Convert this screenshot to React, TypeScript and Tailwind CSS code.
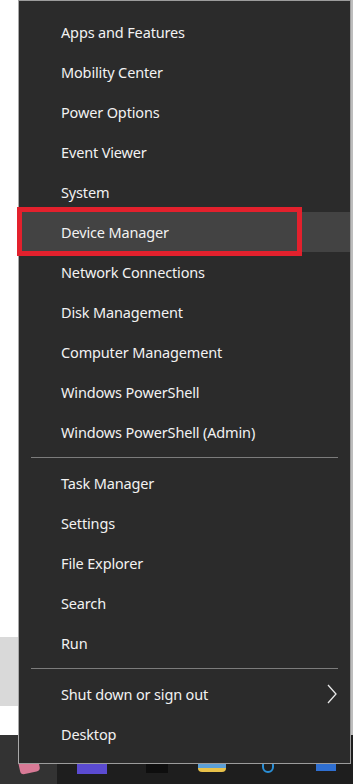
import { Fragment } from "react";

type Entry = { label: string; submenu?: boolean; active?: boolean } | "sep";

const ENTRIES: Entry[] = [
  { label: "Apps and Features" },
  { label: "Mobility Center" },
  { label: "Power Options" },
  { label: "Event Viewer" },
  { label: "System" },
  { label: "Device Manager", active: true },
  { label: "Network Connections" },
  { label: "Disk Management" },
  { label: "Computer Management" },
  { label: "Windows PowerShell" },
  { label: "Windows PowerShell (Admin)" },
  "sep",
  { label: "Task Manager" },
  { label: "Settings" },
  { label: "File Explorer" },
  { label: "Search" },
  { label: "Run" },
  "sep",
  { label: "Shut down or sign out", submenu: true },
  { label: "Desktop" },
];

function Chevron() {
  return (
    <svg width="12" height="20" viewBox="0 0 12 20" className="absolute right-[12px] top-[10px]">
      <polyline points="2,1 10,10 2,19" fill="none" stroke="#e8e8e8" strokeWidth="1.3" />
    </svg>
  );
}

function Taskbar() {
  return (
    <div className="flex h-[49px] bg-[#1e1e1e]">
      <div className="flex w-[57px] items-center justify-center bg-[#333333]">
        <div className="mt-[10px] h-[16px] w-[20px] -rotate-12 rounded-sm bg-[#d87a96]" />
      </div>
      <div className="flex w-[70px] items-center justify-center">
        <div className="mt-[12px] h-[16px] w-[30px] bg-[#5b4bd1]" />
      </div>
      <div className="flex w-[60px] items-center justify-center">
        <div className="mt-[10px] h-[16px] w-[22px] bg-[#0e0e0e]" />
      </div>
      <div className="flex w-[50px] items-center justify-center">
        <div className="mt-[10px] h-[14px] w-[28px] rounded-sm border-b-4 border-[#e8c14a] bg-[#5c9fd6]" />
      </div>
      <div className="flex w-[62px] items-center justify-center">
        <div className="mt-[12px] h-[14px] w-[12px] rounded-full border-2 border-[#2a8fd6]" />
      </div>
      <div className="flex flex-1 items-center justify-center">
        <div className="mt-[8px] h-[14px] w-[20px] bg-[#2f6fd1]" />
      </div>
    </div>
  );
}

export default function App() {
  return (
    <div className="relative h-[784px] w-[353px] overflow-hidden bg-white font-['Segoe_UI','Noto_Sans',sans-serif]">
      {/* desktop behind the menu */}
      <div className="flex h-[735px]">
        <div className="flex flex-1 flex-col">
          <div className="h-[637px] bg-white" />
          <div className="h-[69px] bg-[#d9d9d9]" />
          <div className="flex-1 bg-white" />
        </div>
        <div className="w-[3px] bg-[#bdbdbd]" />
      </div>
      <Taskbar />

      {/* Win+X menu */}
      <div className="absolute left-[18px] top-0 h-[764px] w-[333px] border border-[#9c9c9c] border-l-[#a8a8a8] bg-[#2b2b2b] pt-[11px] text-[14.5px] tracking-[-0.15px] text-[#f2f2f2]">
        {ENTRIES.map((e, i) =>
          e === "sep" ? (
            <div key={i} className="flex h-[11px] items-center px-[12px]">
              <div className="h-px w-full bg-[#7c7c7c]" />
            </div>
          ) : (
            <Fragment key={i}>
              <div className={`relative flex h-[40px] items-center pl-[42px] ${e.active ? "bg-[#434343]" : ""}`}>
                <span className="leading-none">{e.label}</span>
                {e.submenu && <Chevron />}
                {e.active && (
                  <div className="absolute -bottom-[4px] -left-[2px] -top-[5px] w-[285px] border-[5px] border-[#e3212d]" />
                )}
              </div>
            </Fragment>
          )
        )}
      </div>
    </div>
  );
}
